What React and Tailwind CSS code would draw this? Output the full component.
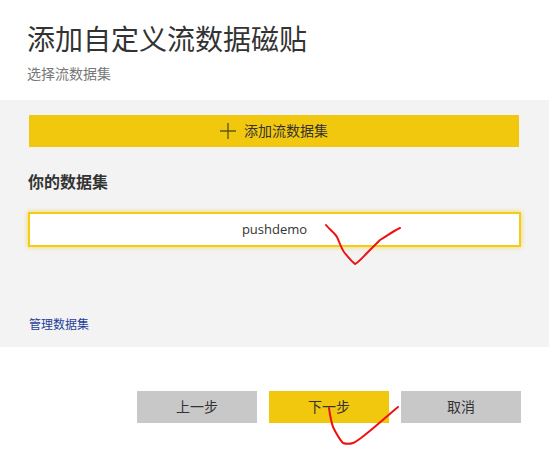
export default function App() {
  return (
    <div className="relative w-[549px] h-[470px] overflow-hidden bg-white text-[#333333] font-['Open_Sans','Noto_Sans_CJK_SC',sans-serif]">
      <header className="h-[100px] pl-[27px] pt-[19px]">
        <h1 className="text-[28px] leading-[40px] font-normal text-[#333333]">添加自定义流数据磁贴</h1>
        <p className="mt-[5px] text-sm leading-5 text-[#777777]">选择流数据集</p>
      </header>
      <main className="h-[247px] bg-[#f3f3f3] pl-[28px] pr-[28px] pt-[15px] flex flex-col">
        <button className="ml-px w-[490px] h-8 bg-[#f2c80f] flex items-center justify-center gap-[8px] text-sm text-[#333333]">
          <svg width="16" height="16" viewBox="0 0 16 16" className="shrink-0">
            <path d="M8 0v16M0 8h16" stroke="#5f5a10" strokeWidth="1.4" fill="none" />
          </svg>
          <span>添加流数据集</span>
        </button>
        <h2 className="mt-[23px] text-base leading-[24px] font-bold text-[#333333]">你的数据集</h2>
        <div className="mt-[18px] w-[493px] h-[35px] border-2 border-[#f6cb13] bg-white shadow-[0_0_5px_rgba(242,200,15,0.7)] flex items-center justify-center text-[13px] text-[#333333]">
          pushdemo
        </div>
        <a className="ml-px mt-[70px] text-xs leading-4 text-[#1f3d99]">管理数据集</a>
      </main>
      <footer className="flex justify-end gap-3 pr-[28px] pt-[44px]">
        <button className="w-[120px] h-8 bg-[#c8c8c8] text-sm text-[#333333]">上一步</button>
        <button className="w-[120px] h-8 bg-[#f2c80f] text-sm text-[#333333]">下一步</button>
        <button className="w-[120px] h-8 bg-[#c8c8c8] text-sm text-[#333333]">取消</button>
      </footer>
      <svg className="absolute inset-0 pointer-events-none" width="549" height="470" viewBox="0 0 549 470" fill="none">
        <path d="M326 225C330 230 335 233 337 237C340 243 341 248 344 252C348 257 351 261 355 264C359 262 363 257 367 253C372 248 376 244 380 240C387 236 393 231 400 228" stroke="#ee1111" strokeWidth="2" strokeLinecap="round" strokeLinejoin="round" />
        <path d="M329 408C330 415 331 421 333 427C336 433 339 439 343 443C346 444 350 444 353 443C356 442 358 440 361 438C372 430 386 417 398 407" stroke="#ee1111" strokeWidth="2" strokeLinecap="round" strokeLinejoin="round" />
      </svg>
    </div>
  );
}
